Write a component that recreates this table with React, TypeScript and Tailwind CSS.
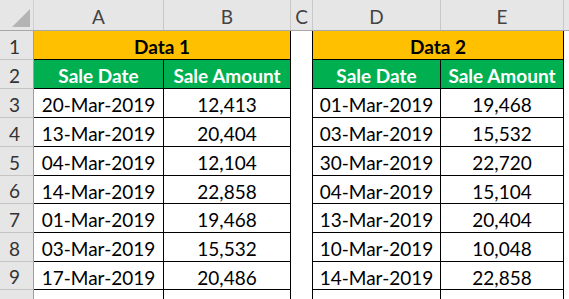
const data1 = [
  ["20-Mar-2019", "12,413"],
  ["13-Mar-2019", "20,404"],
  ["04-Mar-2019", "12,104"],
  ["14-Mar-2019", "22,858"],
  ["01-Mar-2019", "19,468"],
  ["03-Mar-2019", "15,532"],
  ["17-Mar-2019", "20,486"],
  ["28-Mar-2019", "22,720"],
];

const data2 = [
  ["01-Mar-2019", "19,468"],
  ["03-Mar-2019", "15,532"],
  ["30-Mar-2019", "22,720"],
  ["04-Mar-2019", "15,104"],
  ["13-Mar-2019", "20,404"],
  ["10-Mar-2019", "10,048"],
  ["14-Mar-2019", "22,858"],
  ["20-Mar-2019", "16,727"],
];

// row heights incl. bottom border, rows 3..10
const bodyHeights = ["h-[29px]", "h-[29px]", "h-[29px]", "h-[28px]", "h-[29px]", "h-[29px]", "h-[28px]", "h-[29px]"];

function RowHead({ n, faded }: { n: number; faded?: boolean }) {
  return (
    <div
      className={`w-[34px] shrink-0 flex items-center pl-[9px] pt-[2px] bg-[#E6E6E6] border-r border-b border-r-[#9E9E9E] border-b-[#C4C4C4] text-[19px] ${
        faded ? "text-[#D8D8D8]" : "text-[#333]"
      }`}
    >
      {n}
    </div>
  );
}

function Cell({ w, children, faded }: { w: string; children: React.ReactNode; faded?: boolean }) {
  return (
    <div
      className={`${w} shrink-0 flex items-center justify-center pt-[3px] border-r border-b border-black text-[19px] ${
        faded ? "text-[#E4E4E4]" : "text-black"
      }`}
    >
      {children}
    </div>
  );
}

export default function App() {
  return (
    <div className="w-[569px] h-[299px] overflow-hidden bg-white font-['Lato',sans-serif] leading-none">
      {/* Column headers */}
      <div className="flex h-[31px] bg-[#E6E6E6] border-b border-[#A8A8A8] text-[19px] text-[#444]">
        <div className="w-[34px] shrink-0 border-r border-[#D0D0D0] relative">
          <svg className="absolute left-0 top-0" width="34" height="30">
            <polygon points="30,9 30,27 12,27" fill="#B4B4B4" />
          </svg>
        </div>
        <div className="w-[130px] shrink-0 flex items-center justify-center pt-[2px] border-r border-[#C8C8C8]">A</div>
        <div className="w-[127px] shrink-0 flex items-center justify-center pt-[2px] border-r border-[#C8C8C8]">B</div>
        <div className="w-[22px] shrink-0 flex items-center justify-center pt-[2px] border-r border-[#C8C8C8]">C</div>
        <div className="w-[128px] shrink-0 flex items-center justify-center pt-[2px] border-r border-[#C8C8C8]">D</div>
        <div className="w-[123px] shrink-0 flex items-center justify-center pt-[2px] border-r border-[#C8C8C8]">E</div>
        <div className="flex-1" />
      </div>

      {/* Row 1 - titles */}
      <div className="flex h-[29px]">
        <RowHead n={1} />
        <div className="w-[257px] shrink-0 flex items-center justify-center pt-[3px] bg-[#FFC000] border-r border-b border-black text-[19px] font-bold text-black">
          Data 1
        </div>
        <div className="w-[22px] shrink-0 border-r border-black" />
        <div className="w-[251px] shrink-0 flex items-center justify-center pt-[3px] bg-[#FFC000] border-r border-b border-black text-[19px] font-bold text-black">
          Data 2
        </div>
        <div className="flex-1" />
      </div>

      {/* Row 2 - headers */}
      <div className="flex h-[29px]">
        <RowHead n={2} />
        <div className="w-[130px] shrink-0 flex items-center justify-center pt-[3px] bg-[#00B050] border-r border-b border-black text-[19px] font-bold text-white">
          Sale Date
        </div>
        <div className="w-[127px] shrink-0 flex items-center justify-center pt-[3px] bg-[#00B050] border-r border-b border-black text-[19px] font-bold text-white">
          Sale Amount
        </div>
        <div className="w-[22px] shrink-0 border-r border-black" />
        <div className="w-[128px] shrink-0 flex items-center justify-center pt-[3px] bg-[#00B050] border-r border-b border-black text-[19px] font-bold text-white">
          Sale Date
        </div>
        <div className="w-[123px] shrink-0 flex items-center justify-center pt-[3px] bg-[#00B050] border-r border-b border-black text-[19px] font-bold text-white">
          Sale Amount
        </div>
        <div className="flex-1" />
      </div>

      {/* Data rows */}
      {data1.map((r, i) => {
        const faded = i === 7;
        return (
          <div key={i} className={`flex ${bodyHeights[i]}`}>
            <RowHead n={i + 3} faded={faded} />
            <Cell w="w-[130px]" faded={faded}>{r[0]}</Cell>
            <Cell w="w-[127px]" faded={faded}>{r[1]}</Cell>
            <div className="w-[22px] shrink-0 border-r border-black" />
            <Cell w="w-[128px]" faded={faded}>{data2[i][0]}</Cell>
            <Cell w="w-[123px]" faded={faded}>{data2[i][1]}</Cell>
            <div className="flex-1" />
          </div>
        );
      })}
    </div>
  );
}
